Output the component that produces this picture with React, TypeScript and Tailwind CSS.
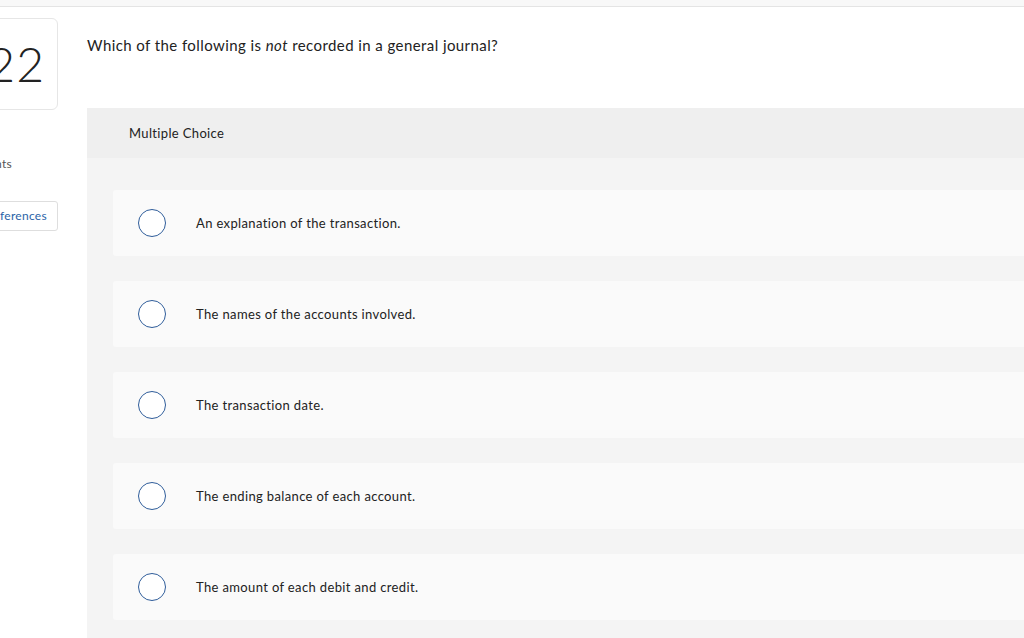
const choices = [
  "An explanation of the transaction.",
  "The names of the accounts involved.",
  "The transaction date.",
  "The ending balance of each account.",
  "The amount of each debit and credit.",
];

function Radio() {
  return (
    <span className="block w-[28px] h-[28px] rounded-full border-[1.5px] border-[#2f5d9a] bg-white shrink-0" />
  );
}

export default function App() {
  return (
    <div
      className="w-[1024px] h-[638px] overflow-hidden bg-white text-[#222]"
      style={{ fontFamily: "Lato, 'Open Sans', Arial, sans-serif" }}
    >
      <div className="h-[7px] bg-[#f8f8f8] border-b border-[#e4e4e4]" />

      <div className="flex gap-[29px] pt-[11px]">
        <aside className="w-[140px] -ml-[82px] shrink-0 flex flex-col">
          <div className="h-[92px] border border-[#e6e6e6] rounded-md flex items-center justify-end pr-[12px]">
            <span className="text-[48px] leading-none font-light text-[#222] tracking-[1px]">22</span>
          </div>
          <div className="mt-[45px] text-[12px] text-[#555] text-right pr-[46px] tracking-[0.3px]">1 points</div>
          <button className="mt-[28px] h-[30px] border border-[#dedede] rounded-[3px] bg-white text-[12px] text-[#2a63a8] text-right pr-[10px] tracking-[0.3px]">
            References
          </button>
        </aside>

        <main className="flex-1 min-w-0">
          <p className="text-[15px] mt-[16px] leading-[22px] tracking-[0.42px]">
            Which of the following is <em>not</em> recorded in a general journal?
          </p>

          <section className="mt-[52px] bg-[#f4f4f4] h-[600px]">
            <div className="h-[50px] bg-[#efefef] flex items-center pl-[42px] pt-[2px] text-[13px] tracking-[0.35px]">
              Multiple Choice
            </div>
            <ul className="pl-[26px] pt-[32px] flex flex-col gap-[25px]">
              {choices.map((c) => (
                <li
                  key={c}
                  className="h-[66px] bg-[#fafafa] rounded-l-[3px] flex items-center pl-[25px] gap-[30px]"
                >
                  <Radio />
                  <span className="text-[13px] text-[#222] tracking-[0.36px] pt-[2px]">{c}</span>
                </li>
              ))}
            </ul>
          </section>
        </main>
      </div>
    </div>
  );
}
